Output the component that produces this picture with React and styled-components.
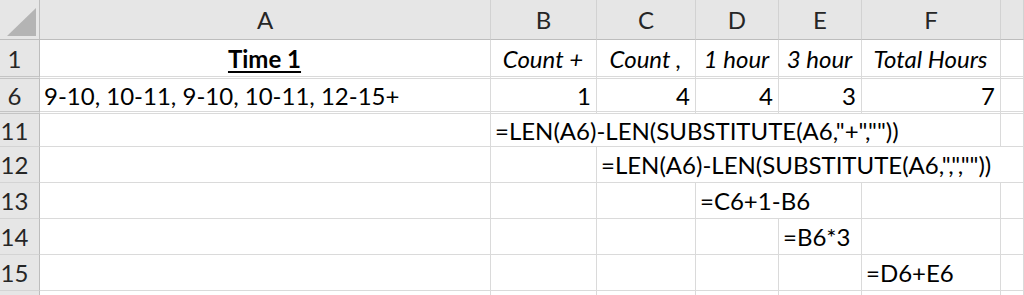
import React from 'react';
import styled, { createGlobalStyle } from 'styled-components';

const GlobalStyle = createGlobalStyle`
    html, body {
        margin:0;
        padding:0;
        background:#fff;
    }
    body {
        width:1024px;
        height:295px;
        overflow:hidden;
    }
`;

const COLS = '40px 451px 106px 99px 83px 83px 139px 1fr';

const Sheet = styled.div`
    display:flex;
    flex-direction:column;
    font-family: Lato, "Liberation Sans", sans-serif;
    font-size:24px;
    color:#000;
`;

const Row = styled.div`
    display:grid;
    grid-template-columns:${COLS};
    height:${p => p.$h}px;
`;

const Corner = styled.div`
    background:#e6e6e6;
    border-right:1px solid #bdbdbd;
    border-bottom:1px solid #bdbdbd;
    display:flex;
    align-items:flex-end;
    justify-content:flex-end;
    padding:0 3px 3px 0;
`;

const Triangle = styled.div`
    width:29px;
    height:28px;
    background:#b4b4b4;
    clip-path:polygon(100% 0, 100% 100%, 0 100%);
`;

const ColHead = styled.div`
    background:#e6e6e6;
    border-right:1px solid #d2d2d2;
    border-bottom:1px solid #bdbdbd;
    display:flex;
    align-items:center;
    justify-content:center;
    color:#262626;
`;

const RowHead = styled.div`
    background:#e6e6e6;
    border-right:1px solid #bdbdbd;
    border-bottom:${p => p.$gap ? '3px double #c4c4c4' : '1px solid #d4d4d4'};
    display:flex;
    align-items:center;
    justify-content:center;
    padding-right:10px;
    color:#262626;
`;

const Cell = styled.div`
    grid-column:span ${p => p.$span || 1};
    border-right:1px solid #dadada;
    border-bottom:${p => p.$gap ? '3px double #dadada' : '1px solid #dadada'};
    display:flex;
    align-items:center;
    justify-content:${p => p.$align === 'right' ? 'flex-end' : p.$align === 'center' ? 'center' : 'flex-start'};
    padding:0 5px 0 4px;
    white-space:nowrap;
    font-style:${p => p.$italic ? 'italic' : 'normal'};
    font-weight:${p => p.$bold ? 700 : 400};
    text-decoration:${p => p.$underline ? 'underline' : 'none'};
    text-underline-offset:3px;
`;

const columns = ['A', 'B', 'C', 'D', 'E', 'F', ''];

const headings = ['Count +', 'Count ,', '1 hour', '3 hour', 'Total Hours'];
const totals = [1, 4, 4, 3, 7];

// each formula row: where it starts (column index from B = 0) and how many columns it covers
const formulas = [
    { row: 11, h: 33, start: 0, span: 5, text: '=LEN(A6)-LEN(SUBSTITUTE(A6,"+",""))' },
    { row: 12, h: 36, start: 1, span: 5, text: '=LEN(A6)-LEN(SUBSTITUTE(A6,",",""))' },
    { row: 13, h: 36, start: 2, span: 2, text: '=C6+1-B6' },
    { row: 14, h: 36, start: 3, span: 1, text: '=B6*3' },
    { row: 15, h: 36, start: 4, span: 1, text: '=D6+E6' },
];

const FormulaRow = ({ row, h, start, span, text }) => {
    const before = Array.from({ length: start });
    const after = Array.from({ length: 6 - start - span });
    return <Row $h={h}>
        <RowHead>{row}</RowHead>
        <Cell />
        {before.map((_, i) => <Cell key={'b' + i} />)}
        <Cell $span={span}>{text}</Cell>
        {after.map((_, i) => <Cell key={'a' + i} />)}
    </Row>
}

const App = () => {
    return <>
        <GlobalStyle />
        <Sheet>
            <Row $h={40}>
                <Corner><Triangle /></Corner>
                {columns.map((c, i) => <ColHead key={i}>{c}</ColHead>)}
            </Row>
            <Row $h={39}>
                <RowHead $gap>1</RowHead>
                <Cell $gap $align="center" $bold $underline>Time 1</Cell>
                {headings.map(t => <Cell key={t} $gap $align="center" $italic>{t}</Cell>)}
                <Cell $gap />
            </Row>
            <Row $h={35}>
                <RowHead $gap>6</RowHead>
                <Cell $gap>9-10, 10-11, 9-10, 10-11, 12-15+</Cell>
                {totals.map((n, i) => <Cell key={i} $gap $align="right">{n}</Cell>)}
                <Cell $gap />
            </Row>
            {formulas.map(f => <FormulaRow key={f.row} {...f} />)}
            {/* next row, only its top edge shows */}
            <Row $h={10}>
                <RowHead />
                {columns.map((c, i) => <Cell key={i} />)}
            </Row>
        </Sheet>
    </>
}

export default App
